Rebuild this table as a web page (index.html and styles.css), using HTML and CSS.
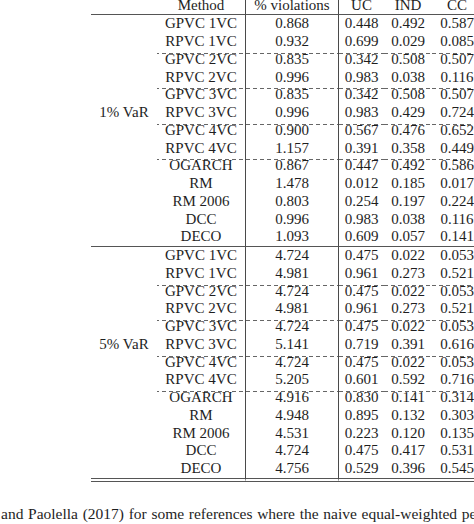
FILE: index.html
```html
<!DOCTYPE html>
<html>

<head>
    <link rel="stylesheet" href="styles.css">
</head>

<body>
    <div class="tableWrap">
        <table class="varTable">
            <colgroup>
                <col class="colGroup">
                <col class="colMethod">
                <col class="colViol">
                <col class="colUc">
                <col class="colInd">
                <col class="colCc">
            </colgroup>
            <tr class="head">
                <td></td>
                <td class="method">Method</td>
                <td class="viol">% violations</td>
                <td>UC</td>
                <td>IND</td>
                <td>CC</td>
            </tr>
            <!-- 1% VaR -->
            <tr><td></td><td class="method">GPVC 1VC</td><td class="viol">0.868</td><td>0.448</td><td>0.492</td><td>0.587</td></tr>
            <tr><td></td><td class="method">RPVC 1VC</td><td class="viol">0.932</td><td>0.699</td><td>0.029</td><td>0.085</td></tr>
            <tr class="dash"><td></td><td class="method">GPVC 2VC</td><td class="viol">0.835</td><td>0.342</td><td>0.508</td><td>0.507</td></tr>
            <tr><td></td><td class="method">RPVC 2VC</td><td class="viol">0.996</td><td>0.983</td><td>0.038</td><td>0.116</td></tr>
            <tr class="dash"><td></td><td class="method">GPVC 3VC</td><td class="viol">0.835</td><td>0.342</td><td>0.508</td><td>0.507</td></tr>
            <tr><td class="group">1% VaR</td><td class="method">RPVC 3VC</td><td class="viol">0.996</td><td>0.983</td><td>0.429</td><td>0.724</td></tr>
            <tr class="dash"><td></td><td class="method">GPVC 4VC</td><td class="viol">0.900</td><td>0.567</td><td>0.476</td><td>0.652</td></tr>
            <tr><td></td><td class="method">RPVC 4VC</td><td class="viol">1.157</td><td>0.391</td><td>0.358</td><td>0.449</td></tr>
            <tr class="dash"><td></td><td class="method">OGARCH</td><td class="viol">0.867</td><td>0.447</td><td>0.492</td><td>0.586</td></tr>
            <tr><td></td><td class="method">RM</td><td class="viol">1.478</td><td>0.012</td><td>0.185</td><td>0.017</td></tr>
            <tr><td></td><td class="method">RM 2006</td><td class="viol">0.803</td><td>0.254</td><td>0.197</td><td>0.224</td></tr>
            <tr><td></td><td class="method">DCC</td><td class="viol">0.996</td><td>0.983</td><td>0.038</td><td>0.116</td></tr>
            <tr class="blockEnd"><td></td><td class="method">DECO</td><td class="viol">1.093</td><td>0.609</td><td>0.057</td><td>0.141</td></tr>
            <!-- 5% VaR -->
            <tr><td></td><td class="method">GPVC 1VC</td><td class="viol">4.724</td><td>0.475</td><td>0.022</td><td>0.053</td></tr>
            <tr><td></td><td class="method">RPVC 1VC</td><td class="viol">4.981</td><td>0.961</td><td>0.273</td><td>0.521</td></tr>
            <tr class="dash"><td></td><td class="method">GPVC 2VC</td><td class="viol">4.724</td><td>0.475</td><td>0.022</td><td>0.053</td></tr>
            <tr><td></td><td class="method">RPVC 2VC</td><td class="viol">4.981</td><td>0.961</td><td>0.273</td><td>0.521</td></tr>
            <tr class="dash"><td></td><td class="method">GPVC 3VC</td><td class="viol">4.724</td><td>0.475</td><td>0.022</td><td>0.053</td></tr>
            <tr><td class="group">5% VaR</td><td class="method">RPVC 3VC</td><td class="viol">5.141</td><td>0.719</td><td>0.391</td><td>0.616</td></tr>
            <tr class="dash"><td></td><td class="method">GPVC 4VC</td><td class="viol">4.724</td><td>0.475</td><td>0.022</td><td>0.053</td></tr>
            <tr><td></td><td class="method">RPVC 4VC</td><td class="viol">5.205</td><td>0.601</td><td>0.592</td><td>0.716</td></tr>
            <tr class="dash"><td></td><td class="method">OGARCH</td><td class="viol">4.916</td><td>0.830</td><td>0.141</td><td>0.314</td></tr>
            <tr><td></td><td class="method">RM</td><td class="viol">4.948</td><td>0.895</td><td>0.132</td><td>0.303</td></tr>
            <tr><td></td><td class="method">RM 2006</td><td class="viol">4.531</td><td>0.223</td><td>0.120</td><td>0.135</td></tr>
            <tr><td></td><td class="method">DCC</td><td class="viol">4.724</td><td>0.475</td><td>0.417</td><td>0.531</td></tr>
            <tr class="tableEnd"><td></td><td class="method">DECO</td><td class="viol">4.756</td><td>0.529</td><td>0.396</td><td>0.545</td></tr>
        </table>
    </div>
    <p class="bodyText">and Paolella (2017) for some references where the naive equal-weighted performs</p>
</body>

</html>
```

FILE: styles.css
```css
html, body {
    overflow: hidden;
}

body {
    margin: 0;
    background: #ffffff;
    color: #1e1e1e;
    font-family: "Liberation Serif", serif;
}

.tableWrap {
    padding-left: 91px;
    width: 400px;
}

.varTable {
    border-collapse: separate;
    border-spacing: 0;
    table-layout: fixed;
    width: 391px;
    font-size: 15px;
}

.colGroup { width: 66px; }
.colMethod { width: 89px; }
.colViol { width: 93px; }
.colUc { width: 45px; }
.colInd { width: 48px; }
.colCc { width: 50px; }

.varTable td {
    padding: 0;
    height: 17.75px;
    line-height: 17.75px;
    text-align: center;
    white-space: nowrap;
    box-sizing: border-box;
}

.varTable td.method,
.varTable td.viol {
    border-right: 1px solid #4a4a4a;
}

.head td {
    height: 15.3px;
    line-height: 11px;
    vertical-align: top;
    border-bottom: 1px solid #555;
}

.blockEnd td {
    border-bottom: 1px solid #555;
}

.tableEnd td {
    border-bottom: 4px double #555;
}

.dash td + td {
    background-image: linear-gradient(to right, #666 55%, transparent 55%);
    background-size: 7px 1px;
    background-repeat: repeat-x;
    background-position: 0 2px;
}

.dash td.method {
    background-position: -2px 2px;
}

.bodyText {
    margin: 22px 0 0 0;
    padding-left: 1px;
    font-size: 15.5px;
    line-height: 20px;
    word-spacing: 0.8px;
    white-space: nowrap;
}
```
